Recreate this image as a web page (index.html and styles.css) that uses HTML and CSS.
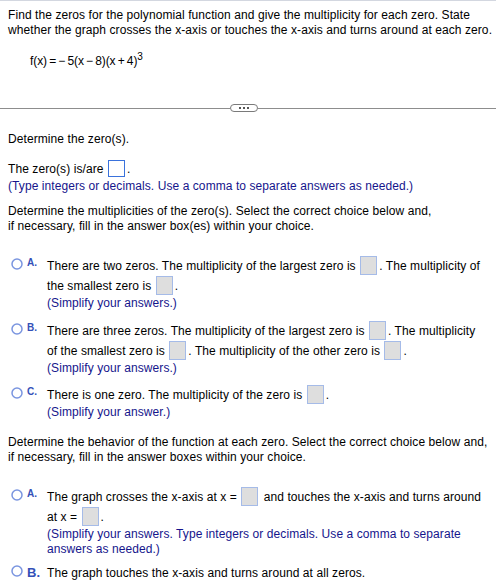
FILE: index.html
```html
<!DOCTYPE html>
<html>
<head>
<meta charset="utf-8">
<link rel="stylesheet" href="styles.css">
</head>
<body>
<div class="page">
  <div class="top">
    <p class="intro">Find the zeros for the polynomial function and give the multiplicity for each zero. State<br>whether the graph crosses the x-axis or touches the x-axis and turns around at each zero.</p>
    <p class="formula">f(x) = − 5(x − 8)(x + 4)<sup>3</sup></p>
  </div>
  <div class="divider">
    <span class="rule rule-left"></span>
    <span class="pill"><svg width="12" height="3" viewBox="0 0 12 3"><rect x="0" y="0" width="2" height="2" fill="#555"/><rect x="4" y="0" width="2" height="2" fill="#555"/><rect x="8" y="0" width="2" height="2" fill="#555"/></svg></span>
    <span class="rule rule-right"></span>
  </div>
  <div class="main">
    <p class="text first">Determine the zero(s).</p>
    <p class="boxline zeros">The zero(s) is/are <span class="box active"></span>.</p>
    <p class="hint">(Type integers or decimals. Use a comma to separate answers as needed.)</p>
    <p class="text instr">Determine the multiplicities of the zero(s). Select the correct choice below and,<br>if necessary, fill in the answer box(es) within your choice.</p>

    <div class="option opt-a">
      <span class="radio"><svg width="12" height="12" viewBox="0 0 12 12"><circle cx="6" cy="6" r="5" fill="#fff" stroke="#7a95e0" stroke-width="1.5"/></svg></span>
      <span class="label">A.</span>
      <div class="content">
        <div class="boxline">There are two zeros. The multiplicity of the largest zero is <span class="box"></span>. The multiplicity of</div>
        <div class="boxline">the smallest zero is <span class="box"></span>.</div>
        <div class="hint">(Simplify your answers.)</div>
      </div>
    </div>

    <div class="option opt-b">
      <span class="radio"><svg width="12" height="12" viewBox="0 0 12 12"><circle cx="6" cy="6" r="5" fill="#fff" stroke="#7a95e0" stroke-width="1.5"/></svg></span>
      <span class="label">B.</span>
      <div class="content">
        <div class="boxline">There are three zeros. The multiplicity of the largest zero is <span class="box"></span>. The multiplicity</div>
        <div class="boxline">of the smallest zero is <span class="box"></span>. The multiplicity of the other zero is <span class="box"></span>.</div>
        <div class="hint">(Simplify your answers.)</div>
      </div>
    </div>

    <div class="option opt-c">
      <span class="radio"><svg width="12" height="12" viewBox="0 0 12 12"><circle cx="6" cy="6" r="5" fill="#fff" stroke="#7a95e0" stroke-width="1.5"/></svg></span>
      <span class="label">C.</span>
      <div class="content">
        <div class="boxline">There is one zero. The multiplicity of the zero is <span class="box"></span>.</div>
        <div class="hint">(Simplify your answer.)</div>
      </div>
    </div>

    <p class="text behavior">Determine the behavior of the function at each zero. Select the correct choice below and,<br>if necessary, fill in the answer boxes within your choice.</p>

    <div class="option opt-a2">
      <span class="radio"><svg width="12" height="12" viewBox="0 0 12 12"><circle cx="6" cy="6" r="5" fill="#fff" stroke="#7a95e0" stroke-width="1.5"/></svg></span>
      <span class="label">A.</span>
      <div class="content">
        <div class="boxline">The graph crosses the x-axis at x = <span class="box"></span> and touches the x-axis and turns around</div>
        <div class="boxline">at x = <span class="box"></span>.</div>
        <div class="hint">(Simplify your answers. Type integers or decimals. Use a comma to separate<br>answers as needed.)</div>
      </div>
    </div>

    <div class="option opt-b2">
      <span class="radio"><svg width="12" height="12" viewBox="0 0 12 12"><circle cx="6" cy="6" r="5" fill="#fff" stroke="#7a95e0" stroke-width="1.5"/></svg></span>
      <span class="label big">B.</span>
      <div class="content">
        <div class="boxline">The graph touches the x-axis and turns around at all zeros.</div>
      </div>
    </div>
  </div>
</div>
</body>
</html>
```

FILE: styles.css
```css
html, body {
  margin: 0;
  padding: 0;
  background: #fff;
}
body {
  font-family: "Liberation Sans", Arial, sans-serif;
  font-size: 12px;
  letter-spacing: 0.08px;
  color: #000;
}
p {
  margin: 0;
}
.page {
  width: 496px;
  height: 584px;
  overflow: hidden;
  border-top: 1px solid #d3d7e0;
  box-sizing: border-box;
}
.top {
  padding: 7px 8px 0;
}
.intro {
  line-height: 15px;
  white-space: nowrap;
}
.formula {
  margin-top: 16px;
  padding-left: 22px;
  line-height: 15px;
  white-space: nowrap;
  letter-spacing: -0.1px;
  word-spacing: -1px;
}
.formula sup {
  font-size: 10px;
  line-height: 0;
  vertical-align: 5px;
}
.divider {
  margin-top: 35px;
  height: 8px;
  display: flex;
  align-items: center;
}
.rule {
  height: 1px;
  background: #8d8d8d;
}
.rule-left {
  width: 230px;
}
.rule-right {
  flex: 1;
}
.pill {
  width: 28px;
  height: 8px;
  box-sizing: border-box;
  border: 1px solid #7a7a7a;
  border-radius: 4px;
  background: #fff;
  display: flex;
  align-items: center;
  justify-content: center;
}
.pill svg {
  display: block;
  margin-left: 2px;
}
.main {
  padding: 0 8px;
}
.text {
  line-height: 15px;
  white-space: nowrap;
}
.first {
  margin-top: 20px;
}
.zeros {
  margin-top: 12px;
}
.instr {
  margin-top: 10px;
}
.behavior {
  margin-top: 15px;
}
.hint {
  line-height: 15px;
  color: #15158c;
  white-space: nowrap;
}
.boxline {
  line-height: 20px;
  white-space: nowrap;
}
.box {
  display: inline-block;
  width: 17px;
  height: 19px;
  box-sizing: border-box;
  background: #dedede;
  border: 1px solid #a5bbe8;
  vertical-align: -5px;
  margin: 0 2px 0 1px;
}
.box.active {
  height: 17px;
  background: #fff;
  border: 1px solid #3a72dc;
  vertical-align: -4px;
}
.option {
  display: flex;
  align-items: flex-start;
}
.opt-a { margin-top: 22px; }
.opt-b { margin-top: 10px; }
.opt-c { margin-top: 9px; }
.opt-a2 { margin-top: 22px; }
.opt-b2 { margin-top: 6px; }
.radio {
  width: 12px;
  height: 12px;
  margin: 2px 0 0 3px;
  flex: none;
}
.radio svg {
  display: block;
}
.label {
  width: 20px;
  margin-left: 4px;
  flex: none;
  font-size: 10px;
  font-weight: bold;
  color: #3450b8;
  line-height: 12px;
  padding-top: 1px;
}
.label.big {
  font-size: 13px;
  line-height: 20px;
  padding-top: 0;
}
.content {
  flex: 1;
}
```
